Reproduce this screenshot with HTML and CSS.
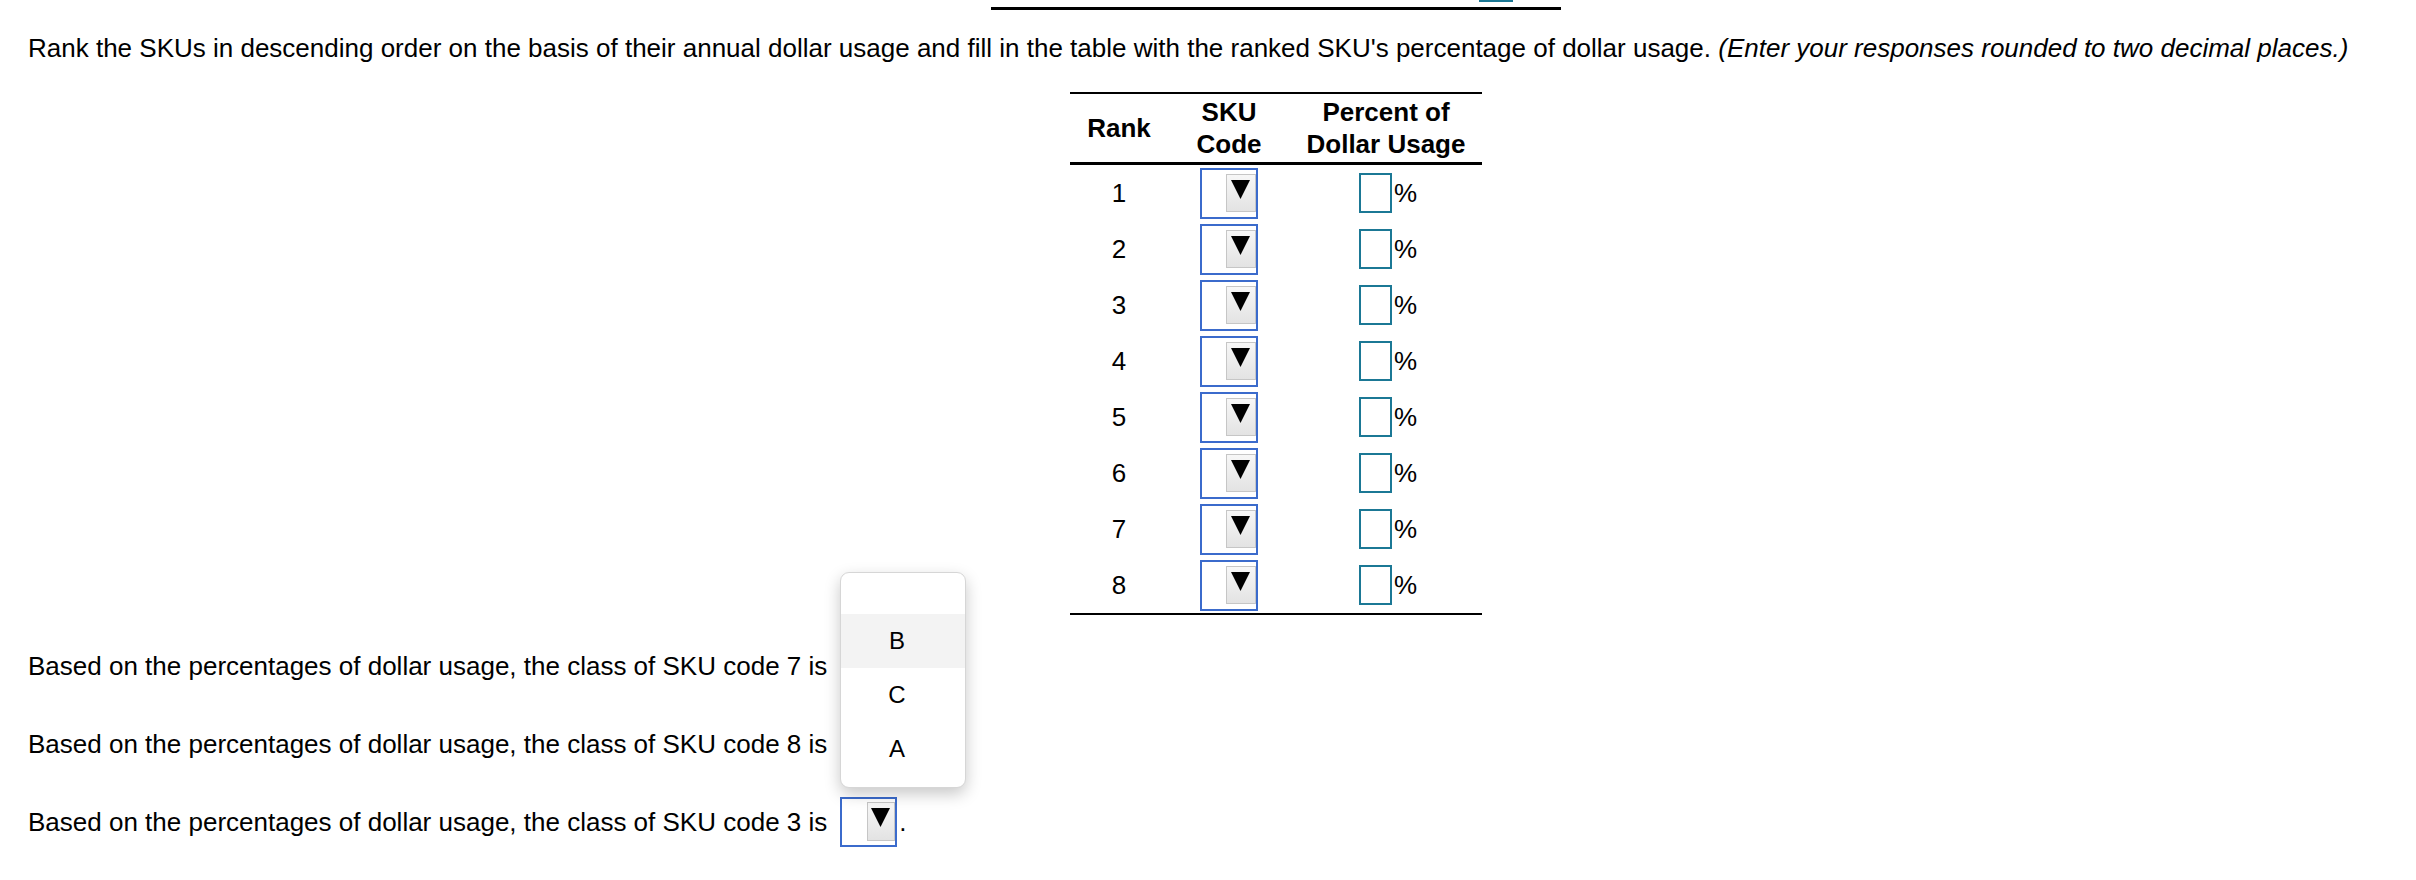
FILE: index.html
```html
<!DOCTYPE html>
<html>
<head>
<meta charset="utf-8">
<link rel="stylesheet" href="styles.css">
</head>
<body>
<div class="top-input"></div>
<div class="top-rule"></div>

<p class="intro">Rank the SKUs in descending order on the basis of their annual dollar usage and fill in the table with the ranked SKU's percentage of dollar usage. <em>(Enter your responses rounded to two decimal places.)</em></p>

<table class="rank-table">
  <colgroup>
    <col class="c-rank">
    <col class="c-sku">
    <col class="c-pct">
  </colgroup>
  <thead>
    <tr>
      <th>Rank</th>
      <th>SKU<br>Code</th>
      <th>Percent of<br>Dollar Usage</th>
    </tr>
  </thead>
  <tbody>
    <tr><td>1</td><td><span class="sel"><span class="btn"><svg width="19" height="19" viewBox="0 0 19 19"><polygon points="0,0 19,0 9.5,19" fill="#000"/></svg></span></span></td><td><span class="pct"><span class="box"></span>%</span></td></tr>
    <tr><td>2</td><td><span class="sel"><span class="btn"><svg width="19" height="19" viewBox="0 0 19 19"><polygon points="0,0 19,0 9.5,19" fill="#000"/></svg></span></span></td><td><span class="pct"><span class="box"></span>%</span></td></tr>
    <tr><td>3</td><td><span class="sel"><span class="btn"><svg width="19" height="19" viewBox="0 0 19 19"><polygon points="0,0 19,0 9.5,19" fill="#000"/></svg></span></span></td><td><span class="pct"><span class="box"></span>%</span></td></tr>
    <tr><td>4</td><td><span class="sel"><span class="btn"><svg width="19" height="19" viewBox="0 0 19 19"><polygon points="0,0 19,0 9.5,19" fill="#000"/></svg></span></span></td><td><span class="pct"><span class="box"></span>%</span></td></tr>
    <tr><td>5</td><td><span class="sel"><span class="btn"><svg width="19" height="19" viewBox="0 0 19 19"><polygon points="0,0 19,0 9.5,19" fill="#000"/></svg></span></span></td><td><span class="pct"><span class="box"></span>%</span></td></tr>
    <tr><td>6</td><td><span class="sel"><span class="btn"><svg width="19" height="19" viewBox="0 0 19 19"><polygon points="0,0 19,0 9.5,19" fill="#000"/></svg></span></span></td><td><span class="pct"><span class="box"></span>%</span></td></tr>
    <tr><td>7</td><td><span class="sel"><span class="btn"><svg width="19" height="19" viewBox="0 0 19 19"><polygon points="0,0 19,0 9.5,19" fill="#000"/></svg></span></span></td><td><span class="pct"><span class="box"></span>%</span></td></tr>
    <tr class="last"><td>8</td><td><span class="sel"><span class="btn"><svg width="19" height="19" viewBox="0 0 19 19"><polygon points="0,0 19,0 9.5,19" fill="#000"/></svg></span></span></td><td><span class="pct"><span class="box"></span>%</span></td></tr>
  </tbody>
</table>

<div class="questions">
  <div class="q"><span>Based on the percentages of dollar usage, the class of SKU code 7 is</span><span class="sel small"><span class="btn"><svg width="19" height="19" viewBox="0 0 19 19"><polygon points="0,0 19,0 9.5,19" fill="#000"/></svg></span></span></div>
  <div class="q"><span>Based on the percentages of dollar usage, the class of SKU code 8 is</span><span class="sel small"><span class="btn"><svg width="19" height="19" viewBox="0 0 19 19"><polygon points="0,0 19,0 9.5,19" fill="#000"/></svg></span></span></div>
  <div class="q"><span>Based on the percentages of dollar usage, the class of SKU code 3 is</span><span class="sel small"><span class="btn"><svg width="19" height="19" viewBox="0 0 19 19"><polygon points="0,0 19,0 9.5,19" fill="#000"/></svg></span></span><span class="dot">.</span></div>

  <ul class="popup">
    <li class="empty"></li>
    <li class="hl">B</li>
    <li>C</li>
    <li>A</li>
  </ul>
</div>
</body>
</html>
```

FILE: styles.css
```css
html, body {
  margin: 0;
  padding: 0;
  background: #fff;
}
body {
  font-family: "Liberation Sans", Arial, sans-serif;
  font-size: 26px;
  color: #000;
  width: 2416px;
  height: 880px;
  overflow: hidden;
}
.top-input {
  margin-left: 1479px;
  width: 34px;
  height: 2px;
  background: #1b7895;
}
.top-rule {
  margin-top: 5px;
  margin-left: 991px;
  width: 570px;
  height: 3px;
  background: #000;
}
.intro {
  margin: 23px 0 0 28px;
  line-height: 30px;
  white-space: nowrap;
}
.intro em {
  font-style: italic;
}
.rank-table {
  margin: 29px 0 0 1070px;
  border-collapse: separate;
  border-spacing: 0;
  table-layout: fixed;
  width: 412px;
}
.c-rank { width: 98px; }
.c-sku { width: 122px; }
.c-pct { width: 192px; }
.rank-table th {
  font-weight: bold;
  line-height: 32px;
  padding: 2px 0;
  border-top: 2px solid #000;
  border-bottom: 3px solid #000;
  text-align: center;
  vertical-align: middle;
}
.rank-table td {
  height: 56px;
  padding: 0;
  text-align: center;
  vertical-align: middle;
  line-height: 30px;
}
.rank-table tr.last td {
  border-bottom: 2px solid #000;
}
.sel {
  display: inline-flex;
  box-sizing: border-box;
  width: 58px;
  height: 51px;
  border: 2px solid #3b6bcc;
  background: #fff;
  justify-content: flex-end;
  align-items: center;
  vertical-align: middle;
}
.btn {
  box-sizing: border-box;
  width: 30px;
  height: 38px;
  border: 1px solid #c6c6c6;
  background: linear-gradient(#f7f7f7, #e3e3e3);
  display: flex;
  justify-content: center;
  align-items: flex-start;
  padding-top: 5px;
  margin-top: -1px;
}
.btn svg {
  display: block;
  margin-left: -1px;
}
.sel.small {
  width: 57px;
  height: 50px;
}
.sel.small .btn {
  width: 28px;
  height: 39px;
}
.pct {
  display: inline-flex;
  align-items: center;
  vertical-align: middle;
  margin-left: 4px;
}
.box {
  display: inline-block;
  box-sizing: border-box;
  width: 33px;
  height: 40px;
  border: 2px solid #1b7895;
  background: #fff;
  margin-right: 2px;
}
.questions {
  position: relative;
  margin: 26px 0 0 28px;
  display: flex;
  flex-direction: column;
  gap: 28px;
}
.q {
  display: flex;
  align-items: center;
  gap: 13px;
  white-space: nowrap;
  height: 50px;
}
.dot {
  margin-left: -11px;
}
.popup {
  position: absolute;
  left: 812px;
  top: -69px;
  width: 126px;
  box-sizing: border-box;
  margin: 0;
  padding: 11px 0;
  list-style: none;
  background: #fff;
  border: 1px solid #d6d6d6;
  border-radius: 9px;
  box-shadow: 0 6px 16px rgba(0, 0, 0, 0.22);
  font-size: 24px;
}
.popup li {
  height: 54px;
  line-height: 54px;
  text-align: center;
  padding-right: 12px;
}
.popup li.empty {
  height: 30px;
}
.popup li.hl {
  background: #f3f3f3;
}
```
